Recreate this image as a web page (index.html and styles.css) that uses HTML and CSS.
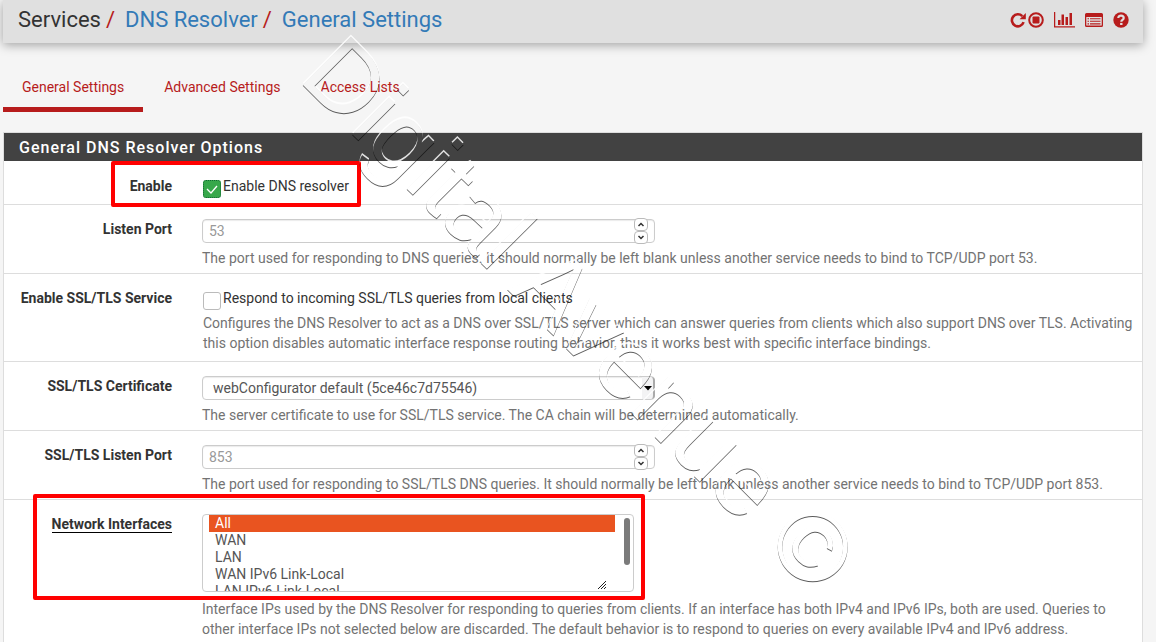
FILE: index.html
```html
<!DOCTYPE html>
<html lang="en">
<head>
<meta charset="utf-8">
<title>Services / DNS Resolver / General Settings</title>
<link rel="stylesheet" href="styles.css">
</head>
<body>
<header class="page-header">
  <h1 class="crumbs"><span>Services</span><span class="slash">/</span><a href="#resolver">DNS Resolver</a><span class="slash">/</span><a href="#general">General Settings</a></h1>
  <nav class="actions" aria-label="Service actions">
    <a href="#restart" aria-label="Restart service"><svg width="17" height="16" viewBox="0 0 17 16"><path d="M12.300 4.200A6 6 0 1 0 13.600 10.200" fill="none" stroke="currentColor" stroke-width="2.600"/><path d="M15.800 1v6.200H9.600z" fill="currentColor"/></svg></a>
    <a href="#stop" aria-label="Stop service"><svg width="16" height="16" viewBox="0 0 16 16"><circle cx="8" cy="8" r="6.800" fill="none" stroke="currentColor" stroke-width="2"/><rect x="4.500" y="4.500" width="7" height="7" rx="1" fill="currentColor"/></svg></a>
    <a class="wide" href="#status" aria-label="Status"><svg width="21" height="16" viewBox="0 0 21 16"><path d="M.600 0v14.900H21" fill="none" stroke="currentColor" stroke-width="1.300"/><path d="M4 8h2.500v5H4zM7.500 2.500H10V13H7.500zM11.500 5H14v8h-2.500zM15.500 1H18v12h-2.500z" fill="currentColor"/></svg></a>
    <a class="wide" href="#log" aria-label="Log entries"><svg width="18" height="16" viewBox="0 0 18 16"><path d="M1.500 1h15A1.500 1.500 0 0 1 18 2.500v11a1.500 1.500 0 0 1-1.500 1.500h-15A1.500 1.500 0 0 1 0 13.500v-11A1.500 1.500 0 0 1 1.500 1zM1.300 5v8.600h15.400V5z" fill="currentColor" fill-rule="evenodd"/><path d="M2.500 6.700H4M5 6.700h10.500M2.500 9.300H4M5 9.300h10.500M2.500 11.900H4M5 11.900h10.500" stroke="currentColor" stroke-width="1.100"/></svg></a>
    <a class="wide" href="#help" aria-label="Help"><svg width="16" height="16" viewBox="0 0 16 16"><circle cx="8" cy="8" r="7.700" fill="currentColor"/><path d="M5.300 6C5.300 2.700 10.700 2.800 10.700 6c0 1.900-2.400 1.900-2.400 3.800" fill="none" stroke="#e0e0e0" stroke-width="2.200"/><path d="M7.100 10.900h2.400v2.100H7.100z" fill="#e0e0e0"/></svg></a>
  </nav>
</header>

<nav class="tabs" aria-label="Resolver sections">
  <a class="tab active" href="#general">General Settings</a>
  <a class="tab" href="#advanced">Advanced Settings</a>
  <a class="tab" href="#access">Access Lists</a>
</nav>

<main class="panel">
  <h2 class="panel-title">General DNS Resolver Options</h2>
  <form>
    <div class="row first">
      <label class="name" for="enable">Enable</label>
      <div class="field">
        <label class="check"><input type="checkbox" id="enable" checked><span>Enable DNS resolver</span></label>
      </div>
      <span class="mark mark-enable"></span>
    </div>
    <div class="row snug">
      <label class="name" for="port">Listen Port</label>
      <div class="field">
        <div class="control">
          <input class="box" type="number" id="port" placeholder="53">
          <span class="spin">
            <button type="button" aria-label="Increase port"><svg width="8" height="5" viewBox="0 0 8 5"><path d="M1.500 4 4 1.500 6.500 4"/></svg></button>
            <button type="button" aria-label="Decrease port"><svg width="8" height="5" viewBox="0 0 8 5"><path d="M1.500 1 4 3.500 6.500 1"/></svg></button>
          </span>
        </div>
        <p class="help">The port used for responding to DNS queries. It should normally be left blank unless another service needs to bind to TCP/UDP port 53.</p>
      </div>
    </div>
    <div class="row">
      <label class="name" for="tls">Enable SSL/TLS Service</label>
      <div class="field">
        <label class="check"><input type="checkbox" id="tls"><span>Respond to incoming SSL/TLS queries from local clients</span></label>
        <p class="help tight">Configures the DNS Resolver to act as a DNS over SSL/TLS server which can answer queries from clients which also support DNS over TLS. Activating this option disables automatic interface response routing behavior, thus it works best with specific interface bindings.</p>
      </div>
    </div>
    <div class="row snug">
      <label class="name" for="cert">SSL/TLS Certificate</label>
      <div class="field">
        <div class="control">
          <select class="box drop" id="cert"><option>webConfigurator default (5ce46c7d75546)</option></select>
          <span class="arrow"><svg width="8" height="5" viewBox="0 0 8 5"><path d="M0 0h8L4 4.500z"/></svg></span>
        </div>
        <p class="help">The server certificate to use for SSL/TLS service. The CA chain will be determined automatically.</p>
      </div>
    </div>
    <div class="row snug">
      <label class="name" for="tlsport">SSL/TLS Listen Port</label>
      <div class="field">
        <div class="control">
          <input class="box" type="number" id="tlsport" placeholder="853">
          <span class="spin">
            <button type="button" aria-label="Increase TLS port"><svg width="8" height="5" viewBox="0 0 8 5"><path d="M1.500 4 4 1.500 6.500 4"/></svg></button>
            <button type="button" aria-label="Decrease TLS port"><svg width="8" height="5" viewBox="0 0 8 5"><path d="M1.500 1 4 3.500 6.500 1"/></svg></button>
          </span>
        </div>
        <p class="help">The port used for responding to SSL/TLS DNS queries. It should normally be left blank unless another service needs to bind to TCP/UDP port 853.</p>
      </div>
    </div>
    <div class="row">
      <label class="name" for="nets"><span class="required">Network Interfaces</span></label>
      <div class="field">
        <div class="control list">
          <select class="multi" id="nets" multiple>
            <option selected>All</option>
            <option>WAN</option>
            <option>LAN</option>
            <option>WAN IPv6 Link-Local</option>
            <option>LAN IPv6 Link-Local</option>
          </select>
          <span class="thumb"></span>
          <svg class="grip" width="8" height="8" viewBox="0 0 8 8"><path d="M0 8 8 0M3 8l5-5M6 8l2-2" stroke="#222" stroke-width="1"/></svg>
        </div>
        <p class="help list-help">Interface IPs used by the DNS Resolver for responding to queries from clients. If an interface has both IPv4 and IPv6 IPs, both are used. Queries to other interface IPs not selected below are discarded. The default behavior is to respond to queries on every available IPv4 and IPv6 address.</p>
      </div>
      <span class="mark mark-nets"></span>
    </div>
  </form>
</main>

<svg class="watermark" width="900" height="642" viewBox="0 0 900 642">
  <defs>
    <filter id="emboss" filterUnits="userSpaceOnUse" x="0" y="0" width="900" height="642" color-interpolation-filters="sRGB">
      <feOffset in="SourceAlpha" dy="1" result="down"/>
      <feComposite in="down" in2="SourceAlpha" operator="out" result="lower"/>
      <feFlood flood-color="#000" flood-opacity=".65"/>
      <feComposite in2="lower" operator="in" result="dark"/>
      <feOffset in="SourceAlpha" dy="-2" result="up"/>
      <feComposite in="up" in2="SourceAlpha" operator="out" result="upper"/>
      <feFlood flood-color="#fff" flood-opacity=".85"/>
      <feComposite in2="upper" operator="in" result="light"/>
      <feMerge><feMergeNode in="light"/><feMergeNode in="dark"/></feMerge>
    </filter>
  </defs>
  <g filter="url(#emboss)"><text class="watermark-text" transform="translate(297 79) rotate(45)">Digital Avenue ©</text></g>
</svg>
</body>
</html>
```
FILE: styles.css
```css
* { box-sizing: border-box; }

body {
  position: relative;
  margin: 0;
  padding: 0 13px 0 3px;
  background: #f5f5f5;
  color: #333;
  font: 14px/20px Roboto, "Liberation Sans", sans-serif;
}

.page-header {
  display: flex;
  align-items: center;
  justify-content: space-between;
  height: 43px;
  padding: 0 14px 3px 15px;
  background: #e0e0e0;
  box-shadow: 0 2px 10px rgba(0, 0, 0, .35);
}

.crumbs {
  display: flex;
  margin: 0;
  font-size: 22px;
  font-weight: 400;
  line-height: 28px;
}
.crumbs a { color: #337ab7; text-decoration: none; }
.slash { margin: 0 10px 0 5px; color: #b71c1c; }

.actions { display: flex; align-items: center; gap: 1px; }
.actions a { display: flex; color: #b71c1c; }
.actions .wide { margin-left: 9px; }

.tabs { display: flex; gap: 2px; margin-bottom: 20px; padding-top: 26px; }
.tab {
  padding: 8px 19px 10px;
  border-bottom: 5px solid transparent;
  color: #b71c1c;
  text-decoration: none;
}
.tab.active { border-bottom-color: #b71c1c; }

.panel { border: 1px solid #ddd; background: #fff; }
.panel-title {
  margin: 0;
  padding: 5px 15px 3px;
  background: #424242;
  color: #fff;
  font-size: 16px;
  font-weight: 500;
  line-height: 20px;
  letter-spacing: 1px;
}

.row {
  position: relative;
  display: grid;
  grid-template-columns: 168px 1fr;
  column-gap: 30px;
  padding: 14px 7px 8px 0;
  border-bottom: 1px solid #ddd;
}
.row.first { padding: 15px 7px 6px 0; }
.row.snug { padding: 14px 7px 5px 0; }
.row:last-child { border-bottom: 0; }
.name { text-align: right; font-weight: 700; }
.required { border-bottom: 1px solid #000; }

.check { display: flex; align-items: flex-start; gap: 2px; padding-left: 1px; }
.check input {
  appearance: none;
  width: 18px;
  height: 18px;
  margin: 4px 0 0;
  border: 1px solid #bbb;
  border-radius: 3px;
  background: #fff;
}
.check input:checked {
  border: 1px dotted #163;
  background: #37a84b url("data:image/svg+xml,%3Csvg xmlns='http://www.w3.org/2000/svg' viewBox='0 0 16 16'%3E%3Cpath d='M3 8l4 4 6-7' fill='none' stroke='white' stroke-width='1.300'/%3E%3C/svg%3E") center / 16px 16px no-repeat;
}

.control { position: relative; width: 100%; max-width: 453px; }
.box {
  display: block;
  width: 100%;
  height: 24px;
  padding: 0 6px;
  border: 1px solid #ccc;
  border-radius: 4px;
  background: #fff;
  box-shadow: inset 0 1px 1px rgba(0, 0, 0, .08);
  color: #555;
  font: inherit;
  appearance: none;
}
.box[type="number"] { appearance: textfield; }
.box::placeholder { color: #999; }
.drop { padding: 0 10px; }

.spin {
  position: absolute;
  top: -1px;
  right: 7px;
  display: grid;
  width: 14px;
}
.spin button {
  display: flex;
  align-items: center;
  justify-content: center;
  height: 13px;
  padding: 0;
  border: 1px solid #bbb;
  border-radius: 4px;
  background: #fff;
}
.spin path { fill: none; stroke: #333; stroke-width: 1.5; }

.arrow {
  position: absolute;
  top: 1px;
  right: 0;
  display: flex;
  align-items: center;
  justify-content: center;
  width: 13px;
  height: 22px;
  border-right: 2px solid #aaa;
  border-radius: 0 4px 4px 0;
  background: #f3f3f4;
  pointer-events: none;
}

.help { margin: 5px 0 0; color: #737373; }
.help.tight { margin-top: 3px; padding-left: 1px; }
.help.list-help { margin-top: 7px; }

.list { max-width: 432px; }
.multi {
  display: block;
  width: 100%;
  height: 78px;
  padding: 0 18px 0 6px;
  border: 1px solid #ccc;
  border-radius: 4px;
  background: #fff;
  color: #555;
  font: inherit;
  overflow: hidden;
  scrollbar-width: none;
}
.multi option { min-height: 17px; padding: 0 6px; line-height: 17px; }
.multi option:checked { background: #e95420 linear-gradient(#e95420, #e95420); color: #fff; }
.thumb {
  position: absolute;
  top: 4px;
  right: 4px;
  width: 6px;
  height: 47px;
  border-radius: 3px;
  background: #7b7b7b;
}
.grip { position: absolute; right: 28px; bottom: 3px; }

.mark { position: absolute; border: 4px solid #f00; border-radius: 2px; pointer-events: none; }
.mark-enable { top: 0; left: 107px; width: 250px; height: 46px; z-index: 1; }
.mark-nets { top: -6px; left: 29px; width: 612px; height: 106px; }

.watermark { position: absolute; top: 0; left: 0; z-index: 2; pointer-events: none; }
.watermark-text { font: 99px "Liberation Sans", Arial, sans-serif; }
```
